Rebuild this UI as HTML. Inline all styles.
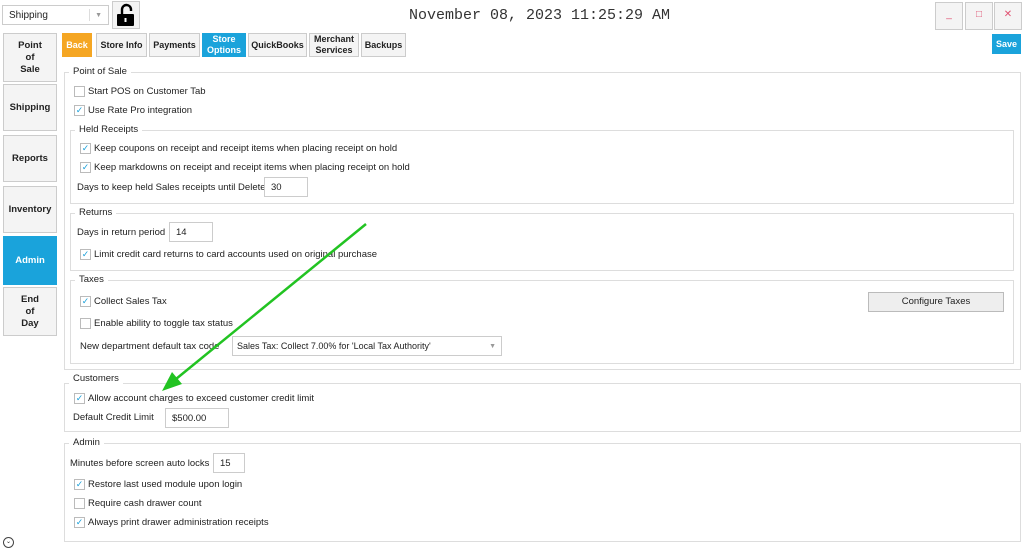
<html><head><style>
body{margin:0;width:1024px;height:550px;background:#fff;font-family:"Liberation Sans",sans-serif;font-size:9.5px;color:#222;position:relative;overflow:hidden}
.a{position:absolute}
.sb{position:absolute;left:3px;width:52px;background:#f4f4f4;border:1px solid #ccc;font-weight:bold;font-size:9.5px;display:flex;align-items:center;justify-content:center;text-align:center;line-height:12px}
.tb{position:absolute;top:33px;height:22px;background:#f4f4f4;border:1px solid #ccc;font-weight:bold;font-size:9px;display:flex;align-items:center;justify-content:center;text-align:center;line-height:11px}
.g{position:absolute;border:1px solid #ddd}
.gl{position:absolute;background:#fff;padding:0 4px;font-size:9.5px}
.cb{position:absolute;width:9px;height:9px;border:1px solid #bbb;background:#fff;font-size:9px;color:#1a9fd9;line-height:9px;text-align:center}
.t{position:absolute;white-space:nowrap}
.in{position:absolute;border:1px solid #ccc;background:#fff;padding-left:6px;box-sizing:border-box;display:flex;align-items:center}
.wb{position:absolute;top:2px;width:26px;height:26px;background:#f4f4f4;border:1px solid #ccc;color:#e05070;font-size:10px;text-align:center;line-height:24px}
</style></head><body>
<div class="in" style="left:2px;top:5px;width:107px;height:20px;font-size:10px">Shipping<span style="position:absolute;right:6px;color:#999;font-size:7px">▼</span><span style="position:absolute;right:18px;top:3px;height:12px;border-left:1px solid #ddd"></span></div>
<div class="a" style="left:112px;top:1px;width:26px;height:26px;border:1px solid #ccc;background:#f4f4f4">
<svg width="26" height="26"><path d="M9 12V7.5a4.5 4.5 0 0 1 9 0V9" stroke="#000" stroke-width="2.4" fill="none"/><rect x="4" y="12" width="17" height="12" rx="1" fill="#000"/><rect x="11.5" y="16" width="2" height="4" fill="#fff"/></svg></div>
<div class="t" style="left:409px;top:7px;font-family:'Liberation Mono',monospace;font-size:15px;color:#333">November 08, 2023 11:25:29 AM</div>
<div class="wb" style="left:935px">_</div><div class="wb" style="left:965px">□</div><div class="wb" style="left:994px">✕</div>
<div class="a" style="left:992px;top:34px;width:29px;height:20px;background:#1aa3db;color:#fff;font-weight:bold;font-size:9px;text-align:center;line-height:20px">Save</div>

<div class="sb" style="top:33px;height:47px">Point<br>of<br>Sale</div>
<div class="sb" style="top:84px;height:45px">Shipping</div>
<div class="sb" style="top:135px;height:45px">Reports</div>
<div class="sb" style="top:186px;height:45px">Inventory</div>
<div class="sb" style="top:236px;height:47px;background:#1aa3db;color:#fff;border-color:#1aa3db">Admin</div>
<div class="sb" style="top:287px;height:47px">End<br>of<br>Day</div>

<div class="tb" style="left:62px;width:28px;background:#f5a623;color:#fff;border-color:#f5a623">Back</div>
<div class="tb" style="left:96px;width:49px">Store Info</div>
<div class="tb" style="left:149px;width:49px">Payments</div>
<div class="tb" style="left:202px;width:42px;background:#1aa3db;color:#fff;border-color:#1aa3db">Store<br>Options</div>
<div class="tb" style="left:248px;width:57px">QuickBooks</div>
<div class="tb" style="left:309px;width:48px">Merchant<br>Services</div>
<div class="tb" style="left:361px;width:43px">Backups</div>

<div class="g" style="left:64px;top:72px;width:955px;height:296px"></div><div class="gl" style="left:69px;top:66px">Point of Sale</div>
<div class="cb" style="left:74px;top:86px"></div><div class="t" style="left:88px;top:86px">Start POS on Customer Tab</div>
<div class="cb" style="left:74px;top:105px">✓</div><div class="t" style="left:88px;top:105px">Use Rate Pro integration</div>

<div class="g" style="left:70px;top:130px;width:942px;height:72px"></div><div class="gl" style="left:75px;top:124px">Held Receipts</div>
<div class="cb" style="left:80px;top:143px">✓</div><div class="t" style="left:94px;top:143px">Keep coupons on receipt and receipt items when placing receipt on hold</div>
<div class="cb" style="left:80px;top:162px">✓</div><div class="t" style="left:94px;top:162px">Keep markdowns on receipt and receipt items when placing receipt on hold</div>
<div class="t" style="left:77px;top:182px">Days to keep held Sales receipts until Delete</div><div class="in" style="left:264px;top:177px;width:44px;height:20px">30</div>

<div class="g" style="left:70px;top:213px;width:942px;height:56px"></div><div class="gl" style="left:75px;top:207px">Returns</div>
<div class="t" style="left:77px;top:227px">Days in return period</div><div class="in" style="left:169px;top:222px;width:44px;height:20px">14</div>
<div class="cb" style="left:80px;top:249px">✓</div><div class="t" style="left:94px;top:249px">Limit credit card returns to card accounts used on original purchase</div>

<div class="g" style="left:70px;top:280px;width:942px;height:82px"></div><div class="gl" style="left:75px;top:274px">Taxes</div>
<div class="cb" style="left:80px;top:296px">✓</div><div class="t" style="left:94px;top:296px">Collect Sales Tax</div>
<div class="a" style="left:868px;top:292px;width:134px;height:18px;border:1px solid #bbb;background:#eee;text-align:center;line-height:18px">Configure Taxes</div>
<div class="cb" style="left:80px;top:318px"></div><div class="t" style="left:94px;top:318px">Enable ability to toggle tax status</div>
<div class="t" style="left:80px;top:341px">New department default tax code</div>
<div class="in" style="left:232px;top:336px;width:270px;height:20px;font-size:9px;padding-left:4px">Sales Tax: Collect 7.00% for 'Local Tax Authority'<span style="position:absolute;right:5px;color:#999;font-size:7px">▼</span></div>

<div class="g" style="left:64px;top:383px;width:955px;height:47px"></div><div class="gl" style="left:69px;top:373px">Customers</div>
<div class="cb" style="left:74px;top:393px">✓</div><div class="t" style="left:88px;top:393px">Allow account charges to exceed customer credit limit</div>
<div class="t" style="left:73px;top:412px">Default Credit Limit</div><div class="in" style="left:165px;top:408px;width:64px;height:20px">$500.00</div>

<div class="g" style="left:64px;top:443px;width:955px;height:97px"></div><div class="gl" style="left:69px;top:437px">Admin</div>
<div class="t" style="left:70px;top:458px">Minutes before screen auto locks</div><div class="in" style="left:213px;top:453px;width:32px;height:20px">15</div>
<div class="cb" style="left:74px;top:479px">✓</div><div class="t" style="left:88px;top:479px">Restore last used module upon login</div>
<div class="cb" style="left:74px;top:498px"></div><div class="t" style="left:88px;top:498px">Require cash drawer count</div>
<div class="cb" style="left:74px;top:517px">✓</div><div class="t" style="left:88px;top:517px">Always print drawer administration receipts</div>

<div class="a" style="left:3px;top:537px;width:9px;height:9px;border:1px solid #444;border-radius:50%;font-size:6px;line-height:9px;text-align:center">⌄</div>
<svg class="a" style="left:0;top:0" width="1024" height="550"><line x1="366" y1="224" x2="176" y2="379" stroke="#22c322" stroke-width="2.5"/><polygon points="162,391 172,372 182,384" fill="#22c322"/></svg>
</body></html>
